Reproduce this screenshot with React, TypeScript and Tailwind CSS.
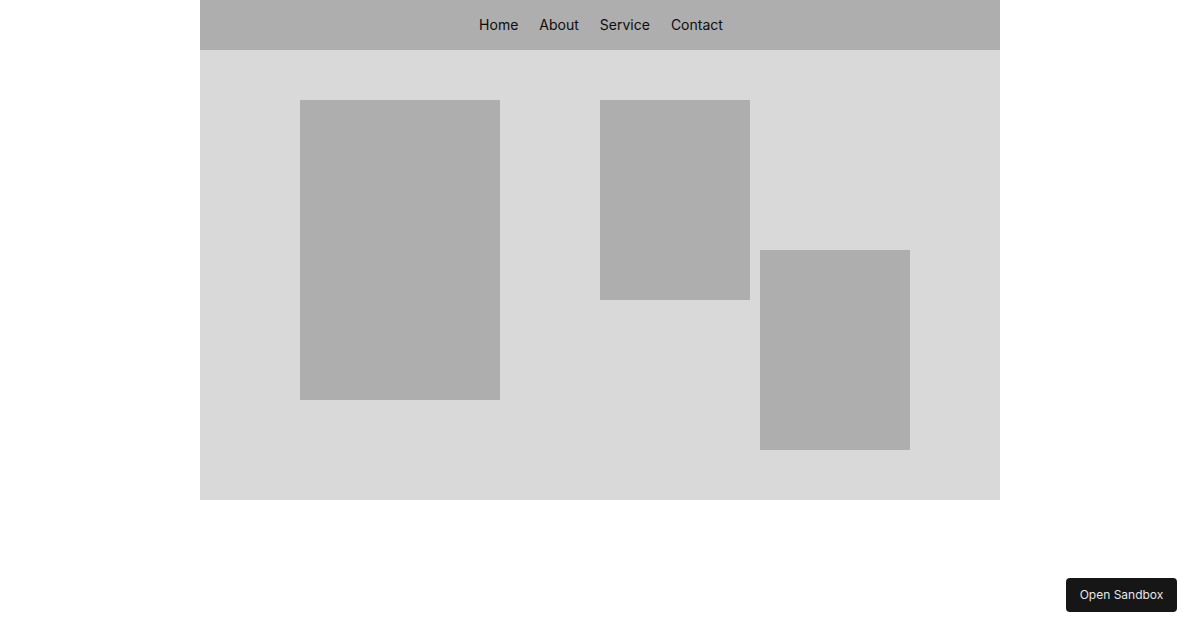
const LINKS = ['Home', 'About', 'Service', 'Contact'];

export default function App() {
  return (
    <div className="min-h-screen bg-white font-['Inter',sans-serif]">
      <div className="mx-auto w-[800px]">
        <header className="flex h-[50px] items-center justify-center bg-[#aeaeae]">
          <nav className="flex items-center gap-[21px] pl-[2px]">
            {LINKS.map((l) => (
              <a key={l} href="#" className="text-[14px] leading-none text-[#0d0d0d]">
                {l}
              </a>
            ))}
          </nav>
        </header>
        <main className="flex h-[450px] items-start bg-[#d9d9d9] pl-[100px] pt-[50px]">
          <div className="h-[300px] w-[200px] bg-[#aeaeae]" />
          <div className="ml-[100px] h-[200px] w-[150px] bg-[#aeaeae]" />
          <div className="ml-[10px] mt-[150px] h-[200px] w-[150px] bg-[#aeaeae]" />
        </main>
      </div>
      <button className="fixed bottom-[18px] right-[23px] flex h-[34px] w-[111px] items-center justify-center rounded-[4px] bg-[#161616] text-[12px] text-[#e8e8e8] font-['Inter',sans-serif]">
        Open Sandbox
      </button>
    </div>
  );
}
